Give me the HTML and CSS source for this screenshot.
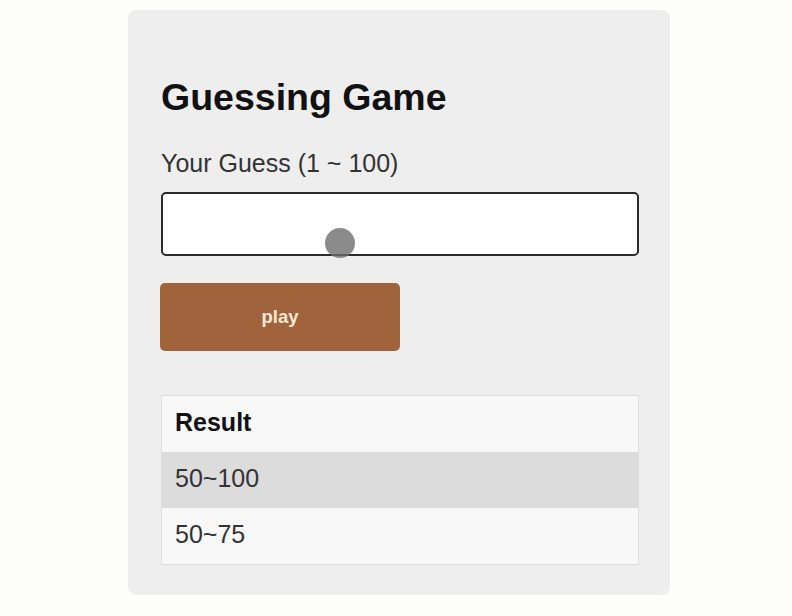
FILE: index.html
```html
<!DOCTYPE html>
<html lang="en">
<head>
  <meta charset="UTF-8" />
  <meta name="viewport" content="width=device-width, initial-scale=1.0"/>
  <title>Guessing Game</title>
  <link rel="stylesheet" href="styles.css">
</head>
<body>
  <div class="game">
    <h1>Guessing Game</h1>
    <label for="guess" class="label">Your Guess (1 ~ 100)</label>
    <div class="field">
      <input type="text" id="guess" class="guess" />
      <span class="cursor"></span>
    </div>
    <button class="play">play</button>
    <table class="results">
      <thead>
        <tr><th>Result</th></tr>
      </thead>
      <tbody>
        <tr class="odd"><td>50~100</td></tr>
        <tr><td>50~75</td></tr>
      </tbody>
    </table>
  </div>
</body>
</html>
```

FILE: styles.css
```css
body {
  margin: 0;
  background: #fdfdfb;
  font-family: "Liberation Sans", Arial, sans-serif;
}
.game {
  width: 542px;
  box-sizing: border-box;
  margin: 10px 0 0 128px;
  padding: 32px 31px 30px 33px;
  background: #eeeeee;
  border-radius: 8px;
}
h1 {
  margin: 34px 0 30px 0;
  font-size: 37.5px;
  line-height: 43px;
  font-weight: bold;
  color: #111;
}
.label {
  display: block;
  margin: 0 0 14px 0;
  font-size: 25px;
  line-height: 29px;
  color: #333;
}
.field {
  position: relative;
  margin-bottom: 27px;
}
.guess {
  display: block;
  width: 100%;
  height: 64px;
  box-sizing: border-box;
  border: 2px solid #2a2a2a;
  border-radius: 5px;
  background: #fff;
  font-size: 25px;
  padding: 0 12px;
}
.cursor {
  position: absolute;
  left: 164px;
  top: 36px;
  width: 30px;
  height: 30px;
  border-radius: 50%;
  background: rgba(110, 110, 110, 0.8);
}
.play {
  display: block;
  width: 240px;
  height: 68px;
  margin: 0 0 44px -1px;
  border: none;
  border-radius: 5px;
  background: #a0633b;
  color: #f6ead6;
  font-family: inherit;
  font-size: 18.5px;
  font-weight: bold;
  cursor: pointer;
}
.results {
  width: 100%;
  border-collapse: collapse;
  border: 1px solid #dedede;
  background: #f8f8f8;
}
.results th,
.results td {
  padding: 11px 13px 15px;
  line-height: 30px;
  text-align: left;
  font-size: 25px;
}
.results th {
  color: #111;
}
.results td {
  color: #333;
}
.results tr.odd {
  background: #dcdcdc;
}
```
